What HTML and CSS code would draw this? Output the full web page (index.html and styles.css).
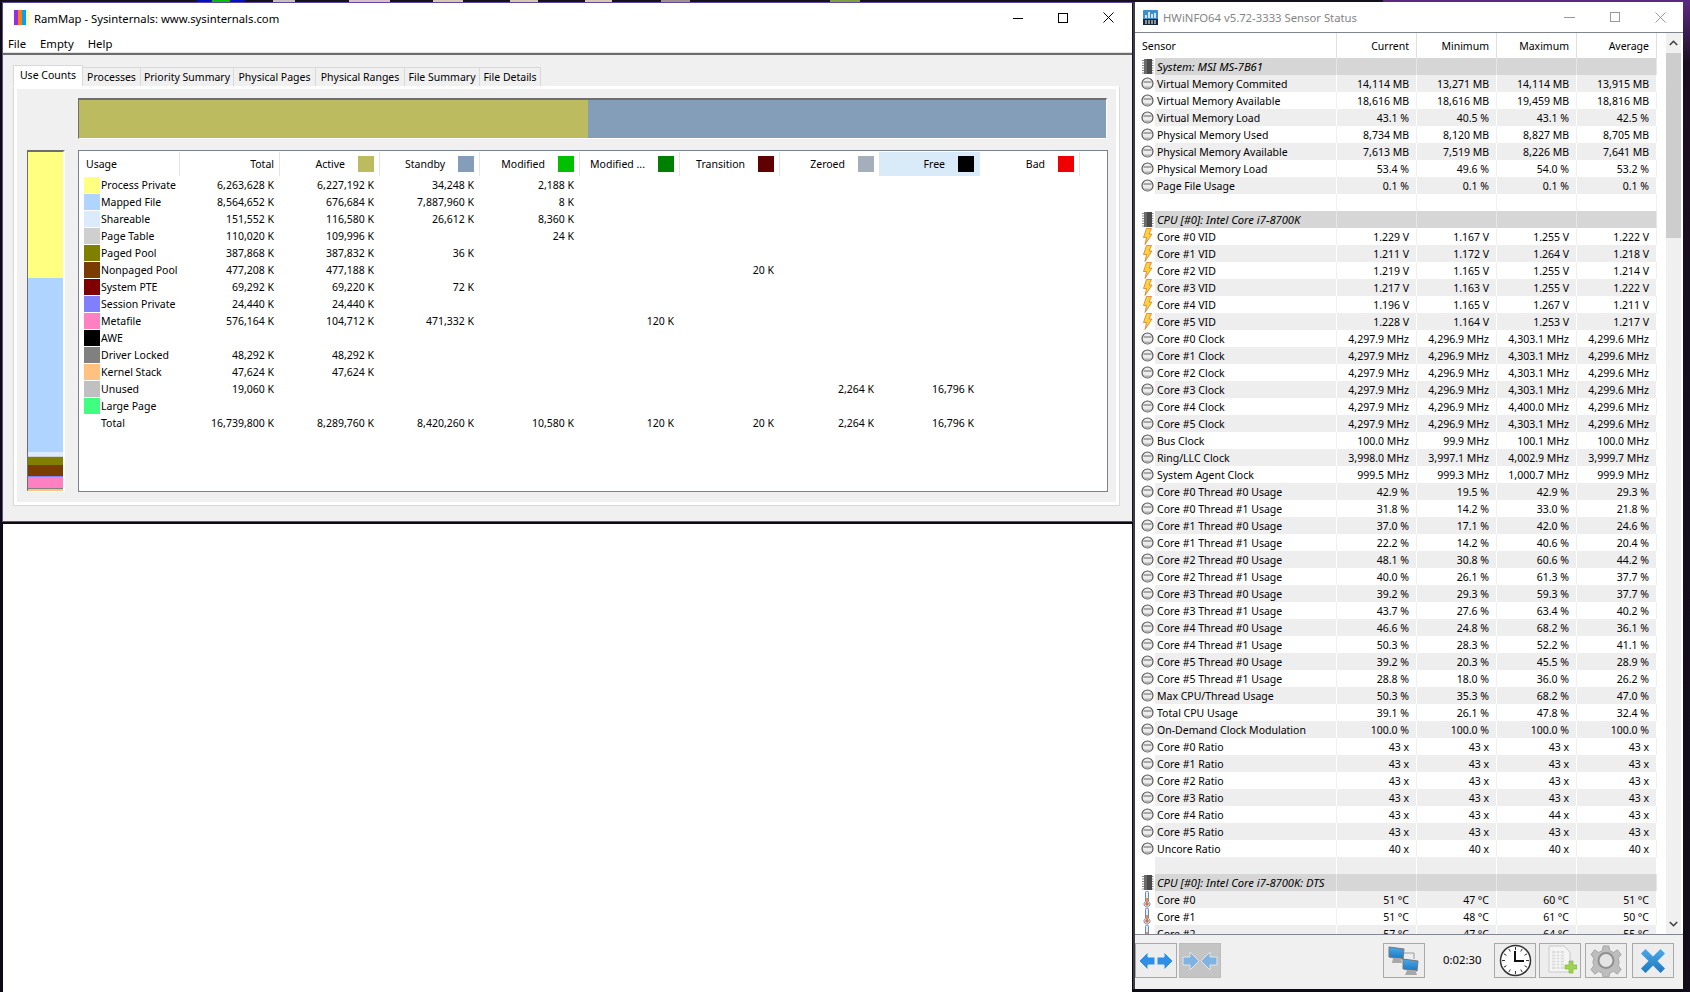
FILE: index.html
```html
<!DOCTYPE html>
<html lang="en">
<head>
<meta charset="utf-8">
<title>RamMap and HWiNFO64</title>
<link rel="stylesheet" href="styles.css">
</head>
<body>
<svg class="defs" width="0" height="0" aria-hidden="true">
  <defs>
    <linearGradient id="blueX" x1="0" y1="0" x2="0" y2="1"><stop offset="0" stop-color="#4aa8ea"/><stop offset="1" stop-color="#1c78c0"/></linearGradient>
    <symbol id="chip" viewBox="0 0 20 17">
      <rect x="9" y="1" width="8" height="15" fill="#4a4a4a"/>
      <rect x="9" y="1" width="3" height="15" fill="#6a6a6a"/>
      <path d="M7 2.500h2M7 5h2M7 7.500h2M7 10h2M7 12.500h2M7 15h2M17 2.500h1.500M17 5h1.500M17 7.500h1.500M17 10h1.500M17 12.500h1.500M17 15h1.500" stroke="#8a8a8a" stroke-width="1"/>
    </symbol>
    <symbol id="gauge" viewBox="0 0 20 17">
      <circle cx="12.500" cy="8.500" r="5.500" fill="#ececec" stroke="#555" stroke-width="1.200"/>
      <path d="M8.500 7h8" stroke="#666" stroke-width="1"/>
      <path d="M8 11.500a5.500 5.500 0 0 0 9 0" fill="#b0b0b0"/>
    </symbol>
    <symbol id="bolt" viewBox="0 0 20 17">
      <path d="M11.500.500h5L14 6h3L10 16.500l1.500-7h-3z" fill="#ffd23c" stroke="#d8782a" stroke-width=".800"/>
    </symbol>
    <symbol id="thermo" viewBox="0 0 20 17">
      <path d="M10.500 1.500a1.500 1.500 0 0 1 3 0v9a3 3 0 1 1-3 0z" fill="#e4edf6" stroke="#6d8bb0" stroke-width="1"/>
      <path d="M12 7v5" stroke="#e07030" stroke-width="1.500"/>
      <circle cx="12" cy="13" r="1.800" fill="#e07030"/>
    </symbol>
  </defs>
</svg>

<div class="desktop">
  <div class="wall-top"></div>
  <div class="wall-mid"></div>
  <div class="blank"></div>

  <section class="win rammap">
    <header class="rm-title">
      <span class="rm-logo"><i class="l1"></i><i class="l2"></i><i class="l3"></i><i class="l4"></i></span>
      <span class="rm-title-text">RamMap - Sysinternals: www.sysinternals.com</span>
      <span class="caption">
        <span class="cap-btn"><svg width="10" height="10" viewBox="0 0 10 10"><path d="M0 5.500h10" stroke="#000"/></svg></span>
        <span class="cap-btn"><svg width="10" height="10" viewBox="0 0 10 10"><rect x=".5" y=".5" width="9" height="9" fill="none" stroke="#000"/></svg></span>
        <span class="cap-btn"><svg width="11" height="11" viewBox="0 0 11 11"><path d="M.5.500l10 10M10.500.500l-10 10" stroke="#000"/></svg></span>
      </span>
    </header>
    <nav class="rm-menu"><span>File</span><span>Empty</span><span>Help</span></nav>
    <div class="rm-client">
      <div class="tabs">
        <span class="tab active">Use Counts</span>
        <span class="tab w58">Processes</span>
        <span class="tab w93">Priority Summary</span>
        <span class="tab w82">Physical Pages</span>
        <span class="tab w89">Physical Ranges</span>
        <span class="tab w75">File Summary</span>
        <span class="tab w61">File Details</span>
      </div>
      <div class="panel">
        <div class="panel-grid">
          <div class="hbar"><i class="hb-active"></i><i class="hb-standby"></i></div>
          <div class="vbar">
            <i class="s1"></i><i class="s2"></i><i class="s3"></i><i class="s4"></i><i class="s5"></i><i class="s6"></i><i class="s7"></i><i class="s8"></i><i class="s9"></i><i class="s10"></i>
          </div>
          <div class="list">
            <div class="lh">
              <span class="lh-c first">Usage</span>
              <span class="lh-c">Total</span>
              <span class="lh-c sw"><b>Active</b><i class="c-active"></i></span>
              <span class="lh-c sw"><b>Standby</b><i class="c-standby"></i></span>
              <span class="lh-c sw"><b>Modified</b><i class="c-mod"></i></span>
              <span class="lh-c sw"><b>Modified ...</b><i class="c-modnw"></i></span>
              <span class="lh-c sw"><b>Transition</b><i class="c-trans"></i></span>
              <span class="lh-c sw"><b>Zeroed</b><i class="c-zero"></i></span>
              <span class="lh-c sw hot"><b>Free</b><i class="c-free"></i></span>
              <span class="lh-c sw"><b>Bad</b><i class="c-bad"></i></span>
            </div>
            <div class="lr"><i class="k k1"></i><span class="n">Process Private</span><span>6,263,628 K</span><span>6,227,192 K</span><span>34,248 K</span><span>2,188 K</span></div>
            <div class="lr"><i class="k k2"></i><span class="n">Mapped File</span><span>8,564,652 K</span><span>676,684 K</span><span>7,887,960 K</span><span>8 K</span></div>
            <div class="lr"><i class="k k3"></i><span class="n">Shareable</span><span>151,552 K</span><span>116,580 K</span><span>26,612 K</span><span>8,360 K</span></div>
            <div class="lr"><i class="k k4"></i><span class="n">Page Table</span><span>110,020 K</span><span>109,996 K</span><span></span><span>24 K</span></div>
            <div class="lr"><i class="k k5"></i><span class="n">Paged Pool</span><span>387,868 K</span><span>387,832 K</span><span>36 K</span></div>
            <div class="lr"><i class="k k6"></i><span class="n">Nonpaged Pool</span><span>477,208 K</span><span>477,188 K</span><span></span><span></span><span></span><span>20 K</span></div>
            <div class="lr"><i class="k k7"></i><span class="n">System PTE</span><span>69,292 K</span><span>69,220 K</span><span>72 K</span></div>
            <div class="lr"><i class="k k8"></i><span class="n">Session Private</span><span>24,440 K</span><span>24,440 K</span></div>
            <div class="lr"><i class="k k9"></i><span class="n">Metafile</span><span>576,164 K</span><span>104,712 K</span><span>471,332 K</span><span></span><span>120 K</span></div>
            <div class="lr"><i class="k k10"></i><span class="n">AWE</span></div>
            <div class="lr"><i class="k k11"></i><span class="n">Driver Locked</span><span>48,292 K</span><span>48,292 K</span></div>
            <div class="lr"><i class="k k12"></i><span class="n">Kernel Stack</span><span>47,624 K</span><span>47,624 K</span></div>
            <div class="lr"><i class="k k13"></i><span class="n">Unused</span><span>19,060 K</span><span></span><span></span><span></span><span></span><span></span><span>2,264 K</span><span>16,796 K</span></div>
            <div class="lr"><i class="k k14"></i><span class="n">Large Page</span></div>
            <div class="lr"><i class="k"></i><span class="n">Total</span><span>16,739,800 K</span><span>8,289,760 K</span><span>8,420,260 K</span><span>10,580 K</span><span>120 K</span><span>20 K</span><span>2,264 K</span><span>16,796 K</span></div>
          </div>
        </div>
      </div>
    </div>
  </section>

  <section class="win hwinfo">
    <header class="hw-title">
      <svg class="hw-logo" width="15" height="15" viewBox="0 0 15 15"><rect width="15" height="15" rx="1" fill="#3d8ec9"/><rect y="9" width="15" height="6" fill="#1b2a38"/><path d="M3 8V5M6 8V2M9 8V4M12 8V3" stroke="#fff" stroke-width="1.500"/><path d="M3 10v4M6 10v4M9 10v4M12 10v4" stroke="#fff" stroke-width="1"/></svg>
      <span class="hw-title-text">HWiNFO64 v5.72-3333 Sensor Status</span>
      <span class="caption dim">
        <span class="cap-btn"><svg width="11" height="11" viewBox="0 0 11 11"><path d="M0 5.500h11" stroke="#999"/></svg></span>
        <span class="cap-btn"><svg width="10" height="10" viewBox="0 0 10 10"><rect x=".5" y=".5" width="9" height="9" fill="none" stroke="#999"/></svg></span>
        <span class="cap-btn"><svg width="11" height="11" viewBox="0 0 11 11"><path d="M.5.500l10 10M10.500.500l-10 10" stroke="#999"/></svg></span>
      </span>
    </header>
    <div class="hw-body">
      <div class="sensors">
        <div class="sh"><span class="sh-name">Sensor</span><span>Current</span><span>Minimum</span><span>Maximum</span><span>Average</span></div>
        <div class="rows">
          <div class="r g"><span class="i"><svg><use href="#chip"/></svg></span><span class="t">System: MSI MS-7B61</span><span></span><span></span><span></span><span></span></div>
          <div class="r o"><span class="i"><svg><use href="#gauge"/></svg></span><span class="t">Virtual Memory Commited</span><span>14,114 MB</span><span>13,271 MB</span><span>14,114 MB</span><span>13,915 MB</span></div>
          <div class="r"><span class="i"><svg><use href="#gauge"/></svg></span><span class="t">Virtual Memory Available</span><span>18,616 MB</span><span>18,616 MB</span><span>19,459 MB</span><span>18,816 MB</span></div>
          <div class="r o"><span class="i"><svg><use href="#gauge"/></svg></span><span class="t">Virtual Memory Load</span><span>43.1 %</span><span>40.5 %</span><span>43.1 %</span><span>42.5 %</span></div>
          <div class="r"><span class="i"><svg><use href="#gauge"/></svg></span><span class="t">Physical Memory Used</span><span>8,734 MB</span><span>8,120 MB</span><span>8,827 MB</span><span>8,705 MB</span></div>
          <div class="r o"><span class="i"><svg><use href="#gauge"/></svg></span><span class="t">Physical Memory Available</span><span>7,613 MB</span><span>7,519 MB</span><span>8,226 MB</span><span>7,641 MB</span></div>
          <div class="r"><span class="i"><svg><use href="#gauge"/></svg></span><span class="t">Physical Memory Load</span><span>53.4 %</span><span>49.6 %</span><span>54.0 %</span><span>53.2 %</span></div>
          <div class="r o"><span class="i"><svg><use href="#gauge"/></svg></span><span class="t">Page File Usage</span><span>0.1 %</span><span>0.1 %</span><span>0.1 %</span><span>0.1 %</span></div>
          <div class="r"><span class="i"></span><span class="t"></span><span></span><span></span><span></span><span></span></div>
          <div class="r g"><span class="i"><svg><use href="#chip"/></svg></span><span class="t">CPU [#0]: Intel Core i7-8700K</span><span></span><span></span><span></span><span></span></div>
          <div class="r"><span class="i"><svg><use href="#bolt"/></svg></span><span class="t">Core #0 VID</span><span>1.229 V</span><span>1.167 V</span><span>1.255 V</span><span>1.222 V</span></div>
          <div class="r o"><span class="i"><svg><use href="#bolt"/></svg></span><span class="t">Core #1 VID</span><span>1.211 V</span><span>1.172 V</span><span>1.264 V</span><span>1.218 V</span></div>
          <div class="r"><span class="i"><svg><use href="#bolt"/></svg></span><span class="t">Core #2 VID</span><span>1.219 V</span><span>1.165 V</span><span>1.255 V</span><span>1.214 V</span></div>
          <div class="r o"><span class="i"><svg><use href="#bolt"/></svg></span><span class="t">Core #3 VID</span><span>1.217 V</span><span>1.163 V</span><span>1.255 V</span><span>1.222 V</span></div>
          <div class="r"><span class="i"><svg><use href="#bolt"/></svg></span><span class="t">Core #4 VID</span><span>1.196 V</span><span>1.165 V</span><span>1.267 V</span><span>1.211 V</span></div>
          <div class="r o"><span class="i"><svg><use href="#bolt"/></svg></span><span class="t">Core #5 VID</span><span>1.228 V</span><span>1.164 V</span><span>1.253 V</span><span>1.217 V</span></div>
          <div class="r"><span class="i"><svg><use href="#gauge"/></svg></span><span class="t">Core #0 Clock</span><span>4,297.9 MHz</span><span>4,296.9 MHz</span><span>4,303.1 MHz</span><span>4,299.6 MHz</span></div>
          <div class="r o"><span class="i"><svg><use href="#gauge"/></svg></span><span class="t">Core #1 Clock</span><span>4,297.9 MHz</span><span>4,296.9 MHz</span><span>4,303.1 MHz</span><span>4,299.6 MHz</span></div>
          <div class="r"><span class="i"><svg><use href="#gauge"/></svg></span><span class="t">Core #2 Clock</span><span>4,297.9 MHz</span><span>4,296.9 MHz</span><span>4,303.1 MHz</span><span>4,299.6 MHz</span></div>
          <div class="r o"><span class="i"><svg><use href="#gauge"/></svg></span><span class="t">Core #3 Clock</span><span>4,297.9 MHz</span><span>4,296.9 MHz</span><span>4,303.1 MHz</span><span>4,299.6 MHz</span></div>
          <div class="r"><span class="i"><svg><use href="#gauge"/></svg></span><span class="t">Core #4 Clock</span><span>4,297.9 MHz</span><span>4,296.9 MHz</span><span>4,400.0 MHz</span><span>4,299.6 MHz</span></div>
          <div class="r o"><span class="i"><svg><use href="#gauge"/></svg></span><span class="t">Core #5 Clock</span><span>4,297.9 MHz</span><span>4,296.9 MHz</span><span>4,303.1 MHz</span><span>4,299.6 MHz</span></div>
          <div class="r"><span class="i"><svg><use href="#gauge"/></svg></span><span class="t">Bus Clock</span><span>100.0 MHz</span><span>99.9 MHz</span><span>100.1 MHz</span><span>100.0 MHz</span></div>
          <div class="r o"><span class="i"><svg><use href="#gauge"/></svg></span><span class="t">Ring/LLC Clock</span><span>3,998.0 MHz</span><span>3,997.1 MHz</span><span>4,002.9 MHz</span><span>3,999.7 MHz</span></div>
          <div class="r"><span class="i"><svg><use href="#gauge"/></svg></span><span class="t">System Agent Clock</span><span>999.5 MHz</span><span>999.3 MHz</span><span>1,000.7 MHz</span><span>999.9 MHz</span></div>
          <div class="r o"><span class="i"><svg><use href="#gauge"/></svg></span><span class="t">Core #0 Thread #0 Usage</span><span>42.9 %</span><span>19.5 %</span><span>42.9 %</span><span>29.3 %</span></div>
          <div class="r"><span class="i"><svg><use href="#gauge"/></svg></span><span class="t">Core #0 Thread #1 Usage</span><span>31.8 %</span><span>14.2 %</span><span>33.0 %</span><span>21.8 %</span></div>
          <div class="r o"><span class="i"><svg><use href="#gauge"/></svg></span><span class="t">Core #1 Thread #0 Usage</span><span>37.0 %</span><span>17.1 %</span><span>42.0 %</span><span>24.6 %</span></div>
          <div class="r"><span class="i"><svg><use href="#gauge"/></svg></span><span class="t">Core #1 Thread #1 Usage</span><span>22.2 %</span><span>14.2 %</span><span>40.6 %</span><span>20.4 %</span></div>
          <div class="r o"><span class="i"><svg><use href="#gauge"/></svg></span><span class="t">Core #2 Thread #0 Usage</span><span>48.1 %</span><span>30.8 %</span><span>60.6 %</span><span>44.2 %</span></div>
          <div class="r"><span class="i"><svg><use href="#gauge"/></svg></span><span class="t">Core #2 Thread #1 Usage</span><span>40.0 %</span><span>26.1 %</span><span>61.3 %</span><span>37.7 %</span></div>
          <div class="r o"><span class="i"><svg><use href="#gauge"/></svg></span><span class="t">Core #3 Thread #0 Usage</span><span>39.2 %</span><span>29.3 %</span><span>59.3 %</span><span>37.7 %</span></div>
          <div class="r"><span class="i"><svg><use href="#gauge"/></svg></span><span class="t">Core #3 Thread #1 Usage</span><span>43.7 %</span><span>27.6 %</span><span>63.4 %</span><span>40.2 %</span></div>
          <div class="r o"><span class="i"><svg><use href="#gauge"/></svg></span><span class="t">Core #4 Thread #0 Usage</span><span>46.6 %</span><span>24.8 %</span><span>68.2 %</span><span>36.1 %</span></div>
          <div class="r"><span class="i"><svg><use href="#gauge"/></svg></span><span class="t">Core #4 Thread #1 Usage</span><span>50.3 %</span><span>28.3 %</span><span>52.2 %</span><span>41.1 %</span></div>
          <div class="r o"><span class="i"><svg><use href="#gauge"/></svg></span><span class="t">Core #5 Thread #0 Usage</span><span>39.2 %</span><span>20.3 %</span><span>45.5 %</span><span>28.9 %</span></div>
          <div class="r"><span class="i"><svg><use href="#gauge"/></svg></span><span class="t">Core #5 Thread #1 Usage</span><span>28.8 %</span><span>18.0 %</span><span>36.0 %</span><span>26.2 %</span></div>
          <div class="r o"><span class="i"><svg><use href="#gauge"/></svg></span><span class="t">Max CPU/Thread Usage</span><span>50.3 %</span><span>35.3 %</span><span>68.2 %</span><span>47.0 %</span></div>
          <div class="r"><span class="i"><svg><use href="#gauge"/></svg></span><span class="t">Total CPU Usage</span><span>39.1 %</span><span>26.1 %</span><span>47.8 %</span><span>32.4 %</span></div>
          <div class="r o"><span class="i"><svg><use href="#gauge"/></svg></span><span class="t">On-Demand Clock Modulation</span><span>100.0 %</span><span>100.0 %</span><span>100.0 %</span><span>100.0 %</span></div>
          <div class="r"><span class="i"><svg><use href="#gauge"/></svg></span><span class="t">Core #0 Ratio</span><span>43 x</span><span>43 x</span><span>43 x</span><span>43 x</span></div>
          <div class="r o"><span class="i"><svg><use href="#gauge"/></svg></span><span class="t">Core #1 Ratio</span><span>43 x</span><span>43 x</span><span>43 x</span><span>43 x</span></div>
          <div class="r"><span class="i"><svg><use href="#gauge"/></svg></span><span class="t">Core #2 Ratio</span><span>43 x</span><span>43 x</span><span>43 x</span><span>43 x</span></div>
          <div class="r o"><span class="i"><svg><use href="#gauge"/></svg></span><span class="t">Core #3 Ratio</span><span>43 x</span><span>43 x</span><span>43 x</span><span>43 x</span></div>
          <div class="r"><span class="i"><svg><use href="#gauge"/></svg></span><span class="t">Core #4 Ratio</span><span>43 x</span><span>43 x</span><span>44 x</span><span>43 x</span></div>
          <div class="r o"><span class="i"><svg><use href="#gauge"/></svg></span><span class="t">Core #5 Ratio</span><span>43 x</span><span>43 x</span><span>43 x</span><span>43 x</span></div>
          <div class="r"><span class="i"><svg><use href="#gauge"/></svg></span><span class="t">Uncore Ratio</span><span>40 x</span><span>40 x</span><span>40 x</span><span>40 x</span></div>
          <div class="r o"><span class="i"></span><span class="t"></span><span></span><span></span><span></span><span></span></div>
          <div class="r g"><span class="i"><svg><use href="#chip"/></svg></span><span class="t">CPU [#0]: Intel Core i7-8700K: DTS</span><span></span><span></span><span></span><span></span></div>
          <div class="r o"><span class="i"><svg><use href="#thermo"/></svg></span><span class="t">Core #0</span><span>51 °C</span><span>47 °C</span><span>60 °C</span><span>51 °C</span></div>
          <div class="r"><span class="i"><svg><use href="#thermo"/></svg></span><span class="t">Core #1</span><span>51 °C</span><span>48 °C</span><span>61 °C</span><span>50 °C</span></div>
          <div class="r o"><span class="i"><svg><use href="#thermo"/></svg></span><span class="t">Core #2</span><span>57 °C</span><span>47 °C</span><span>64 °C</span><span>55 °C</span></div>
        </div>
      </div>
      <div class="scroll">
        <svg class="sc-arrow" width="9" height="6" viewBox="0 0 9 6"><path d="M.8 5 4.500 1.300 8.200 5" fill="none" stroke="#404040" stroke-width="1.600"/></svg>
        <div class="sc-track"><div class="sc-thumb"></div></div>
        <svg class="sc-arrow" width="9" height="6" viewBox="0 0 9 6"><path d="M.8 1 4.500 4.700 8.200 1" fill="none" stroke="#404040" stroke-width="1.600"/></svg>
      </div>
    </div>
    <footer class="hw-bar">
      <span class="tb">
        <svg width="36" height="22" viewBox="0 0 36 22"><path d="M1 11 10 2v5h7v8h-7v5z" fill="#2f8fe6" stroke="#e8eef5"/><path d="M35 11 26 2v5h-7v8h7v5z" fill="#2f8fe6" stroke="#e8eef5"/></svg>
      </span>
      <span class="tb off">
        <svg width="36" height="22" viewBox="0 0 36 22"><path d="M17 11 8 2v5H1v8h7v5z" fill="#7fb4e2" stroke="#dfe5ea"/><path d="M19 11l9-9v5h7v8h-7v5z" fill="#7fb4e2" stroke="#dfe5ea"/></svg>
      </span>
      <span class="tb net">
        <svg width="36" height="32" viewBox="0 0 36 32"><path d="M14 8h14v6" fill="none" stroke="#9a9a9a"/><path d="M3 2 18 4l-1 10-14-2z" fill="url(#blueX)" stroke="#777"/><path d="M7 13h8l1 5H6z" fill="#a8a8a8"/><path d="M17 14l15 2-1 10-14-2z" fill="url(#blueX)" stroke="#777"/><path d="M21 25h8l2 5H19z" fill="#a8a8a8"/></svg>
      </span>
      <span class="timer">0:02:30</span>
      <span class="tb clock">
        <svg width="33" height="33" viewBox="0 0 33 33"><circle cx="16.500" cy="16.500" r="15" fill="#fff" stroke="#333" stroke-width="1.500"/><path d="M16.500 3v3M16.500 27v3M3 16.500h3M27 16.500h3M9.800 4.900l1.500 2.600M23.200 4.900l-1.500 2.600M4.900 9.800l2.600 1.500M28.100 9.800l-2.600 1.500M4.900 23.200l2.600-1.500M28.100 23.200l-2.600-1.500M9.800 28.100l1.500-2.600M23.200 28.100l-1.500-2.600" stroke="#333" stroke-width="1"/><path d="M16 7v10h9" fill="none" stroke="#111" stroke-width="2"/></svg>
      </span>
      <span class="tb report">
        <svg width="34" height="32" viewBox="0 0 34 32"><path d="M6 1h15l6 6v20H6z" fill="#f4f4f4" stroke="#c9c9c9"/><path d="M9 6h12v18H9z" fill="#dcdcdc"/><path d="M9 9h12M9 12h12M9 15h12M9 18h12M9 21h12M13 6v18M17 6v18" stroke="#fafafa"/><path d="M22 20h4v-4h4v4h4v4h-4v4h-4v-4h-4z" fill="#9fd24e" stroke="#7cae36" stroke-width=".600"/></svg>
      </span>
      <span class="tb gear">
        <svg width="32" height="32" viewBox="0 0 32 32"><path d="M13 1h6l1 5 4 2 4-3 4 5-3 4 1 4-1 4 3 4-4 5-4-3-4 2-1 4h-6l-1-4-4-2-4 3-4-5 3-4-1-4 1-4-3-4 4-5 4 3 4-2z" transform="translate(1 0) scale(.94)" fill="#bdbdbd" stroke="#a3a3a3"/><circle cx="16" cy="15.500" r="7.500" fill="#e4e4e4" stroke="#8f8f8f" stroke-width="2"/></svg>
      </span>
      <span class="tb quit">
        <svg width="26" height="26" viewBox="0 0 26 26"><path d="M5.500 1 13 8.500 20.500 1 25 5.500 17.500 13 25 20.500 20.500 25 13 17.500 5.500 25 1 20.500 8.500 13 1 5.500z" fill="url(#blueX)"/></svg>
      </span>
    </footer>
  </section>
</div>
</body>
</html>
```
FILE: styles.css
```css
* { box-sizing: border-box; }
html, body { margin: 0; padding: 0; height: 100%; overflow: hidden; }
body { font-family: "Noto Sans", "Liberation Sans", Arial, sans-serif; font-size: 10.500px; color: #000; background: #0d0a14; }
i { display: block; font-style: normal; }
.defs { position: absolute; }

.desktop { position: relative; width: 1690px; height: 992px; overflow: hidden; background: #0d0a14; }
.wall-top { position: absolute; left: 0; top: 0; width: 1690px; height: 3px;
  background: linear-gradient(90deg, #14101c 0 197px, #0010c0 197px 212px, #00c000 212px 230px, #0010c0 230px 245px, #14101c 245px 273px, #c8c0c0 273px 295px, #14101c 295px 349px, #d8c0d0 349px 390px, #14101c 390px 433px, #d8c8b0 433px 463px, #14101c 463px 510px, #d8c8b0 510px 538px, #14101c 538px 585px, #d8c8b0 585px 612px, #14101c 612px 661px, #a09090 661px 690px, #14101c 690px 830px, #80a040 830px 860px, #14101c 860px 1383px, #5a2a80 1383px 1690px); }
.wall-mid { position: absolute; left: 1683px; top: 3px; width: 7px; height: 989px; background: linear-gradient(180deg, #5a2a80 0, #1a1020 60px, #120c18 100%); }
.blank { position: absolute; left: 3px; top: 524px; width: 1129px; height: 468px; background: #fff; }

.win { position: absolute; display: flex; flex-direction: column; }
.caption { display: flex; margin-left: auto; }
.cap-btn { width: 45px; display: flex; align-items: center; justify-content: center; }

/* RamMap */
.rammap { left: 2px; top: 2px; width: 1131px; height: 520px; background: #fff; border: 1px solid #5e4a96; border-right-color: #1a1424; }
.rm-title { height: 29px; display: flex; align-items: center; padding-left: 11px; font-size: 11.300px; }
.rm-title .caption { height: 29px; margin-right: 1.500px; }
.rm-title-text { padding-top: 2px; }
.rm-logo { display: flex; width: 15px; height: 15px; margin-right: 5px; }
.rm-logo i { height: 15px; }
.l1 { width: 4px; background: #9030e0; }
.l2 { width: 4px; background: #ff8000; }
.l3 { width: 4px; background: #00a0ff; }
.l4 { width: 3px; background: #ffffa0; }
.rm-menu { height: 21px; display: flex; align-items: center; padding: 2px 0 0 5px; gap: 14px; font-size: 11.300px; border-bottom: 1px solid #e0e0e0; }
.rm-client { flex: 1; background: #f0f0f0; border-top: 2px solid #6c6c6c; padding: 10px 12px 15px 10px; display: flex; flex-direction: column; }

.tabs { display: flex; align-items: flex-end; height: 21px; }
.tab { height: 19px; padding-top: 2px; text-align: center; background: #f0f0f0; border: 1px solid #d9d9d9; border-left: 0; border-bottom: 0; }
.tab.active { width: 70px; height: 21px; padding-top: 2px; background: #fff; border-left: 1px solid #d9d9d9; }
.w58 { width: 58px; } .w93 { width: 93px; } .w82 { width: 82px; } .w89 { width: 89px; } .w75 { width: 75px; } .w61 { width: 61px; }

.panel { flex: 1; border: 1px solid #d9d9d9; border-top-color: #fff; background: #fff; padding: 2px 3px 3px; }
.panel-grid { height: 100%; background: #f0f0f0; padding: 9px 0 0 10px; display: grid; grid-template-columns: 38px 1030px; grid-template-rows: 41px 342px; column-gap: 13px; row-gap: 11px; }
.hbar { grid-column: 2; grid-row: 1; display: flex; margin-right: 1px; border-style: solid; border-color: #6e6e6e #fff #fff #6e6e6e; border-width: 2px 1px 1px 1px; box-shadow: inset -1px 0 0 #404040; }
.hb-active { width: 509px; background: #bdbb5f; }
.hb-standby { flex: 1; background: #849db9; }
.vbar { grid-column: 1; grid-row: 2; display: flex; flex-direction: column; border-style: solid; border-width: 2px 2px 2px 1px; border-color: #6e6e6e #fff #fff #6e6e6e; height: 342px; }
.vbar i { flex: none; }
.s1 { height: 126px; background: #ffff80; }
.s2 { height: 174px; background: #aed4ff; }
.s3 { height: 4px; background: #dcebfb; }
.s4 { height: 1px; background: #cfcfcf; }
.s5 { height: 8px; background: #7f7f00; }
.s6 { height: 11px; background: #7a3c00; }
.s7 { height: 1px; background: #8080ff; }
.s8 { height: 11px; background: #ff80c0; }
.s9 { height: 1px; background: #808080; }
.s10 { height: 2px; background: #ffc080; }

.list { grid-column: 2; grid-row: 2; background: #fff; border: 1px solid #7a8290; padding-top: 1px; overflow: hidden; }
.lh { display: flex; height: 24px; }
.lh-c { width: 100px; display: flex; align-items: center; justify-content: flex-end; padding-right: 5px; border-right: 1px solid #e5e5e5; }
.lh-c b { font-weight: 400; margin-right: 13px; }
.lh-c i { width: 16px; height: 16px; flex: none; }
.lh-c.first { width: 101px; justify-content: flex-start; padding-left: 7px; }
.lh-c.hot { background: #d9ebf9; border-right-color: #d9ebf9; }
.c-active { background: #bdbb5f; } .c-standby { background: #849db9; } .c-mod { background: #00c000; } .c-modnw { background: #008000; }
.c-trans { background: #600000; } .c-zero { background: #a4afbb; } .c-free { background: #000; } .c-bad { background: #f00000; }

.lr { display: grid; grid-template-columns: 22px 79px repeat(8, 100px); height: 17px; align-items: center; text-align: right; }
.lr span { padding-right: 6px; white-space: nowrap; }
.lr .n { text-align: left; padding: 0; }
.k { width: 16px; height: 16px; margin-left: 5px; box-sizing: content-box; }
.k1 { background: #ffff80; } .k2 { background: #aed4ff; } .k3 { background: #dcebfb; } .k4 { background: #cfcfcf; } .k5 { background: #7f7f00; } .k6 { background: #7a3c00; } .k7 { background: #7f0000; }
.k8 { background: #8080ff; } .k9 { background: #ff80c0; } .k10 { background: #000; } .k11 { background: #808080; } .k12 { background: #ffc080; } .k13 { background: #c0c0c0; } .k14 { background: #40ff80; }

/* HWiNFO */
.hwinfo { left: 1133px; top: 2px; width: 550px; height: 987px; background: #f0f0f0; border-left: 2px solid #3c3c44; }
.hw-title { height: 31px; flex: none; background: #fff; display: flex; align-items: center; padding-left: 8px; border-bottom: 1px solid #80868e; }
.hw-logo { margin-right: 5px; }
.hw-title-text { font-size: 11.300px; color: #858585; }
.hw-title .caption { height: 29px; margin-right: 0; }
.caption.dim .cap-btn { width: 45.500px; }

.hw-body { height: 902px; flex: none; display: flex; background: #fff; overflow: hidden; border-bottom: 1px solid #80868e; }
.sensors { width: 531px; flex: none; overflow: hidden; }
.sh { display: grid; grid-template-columns: 202px 80px 80px 80px 80px; height: 25px; align-items: center; text-align: right; }
.sh span { height: 25px; line-height: 27px; padding-right: 7px; border-right: 1px solid #e0e0e0; }
.sh .sh-name { text-align: left; padding-left: 7px; }
.rows { overflow: hidden; }
.r { display: grid; grid-template-columns: 20px 182px 80px 80px 80px 80px; height: 17px; text-align: right; white-space: nowrap; }
.r span { padding: 1px 7px 0 0; line-height: 16px; border-right: 1px solid #f0f0f0; }
.r.o span { background: #eeeeee; border-right-color: #fff; }
.r.g span { background: #d6d6d6; border-right-color: #e6e6e6; border-bottom: 1px solid #fff; }
.r .i, .r.o .i, .r.g .i { padding: 0; background: #fff; border: 0; }
.r .i svg { width: 20px; height: 17px; display: block; }
.r .t { text-align: left; padding-left: 2px; padding-right: 0; overflow: visible; }
.r.g .t { font-style: italic; font-size: 11.200px; }

.scroll { width: 15px; background: #f0f0f0; display: flex; flex-direction: column; align-items: center; }
.sc-arrow { flex: none; margin: 7px 0; }
.sc-track { flex: 1; width: 100%; }
.sc-thumb { height: 185px; background: #cdcdcd; }

.hw-bar { flex: 1; display: flex; padding: 8px 0 0 0; background: #f0f0f0; }
.tb { width: 42px; height: 35px; border: 1px solid #a9a9a9; background: #ededed; display: flex; align-items: center; justify-content: center; margin-right: 2px; }
.tb.off { background: #c4c4c4; border-color: #bdbdbd; }
.tb.net { margin-left: 160px; }
.timer { width: 67px; padding-left: 16px; line-height: 33px; font-size: 11.300px; }
.tb.report { margin-right: 4px; margin-left: 1px; }
.tb.gear { margin-right: 5px; }
```
